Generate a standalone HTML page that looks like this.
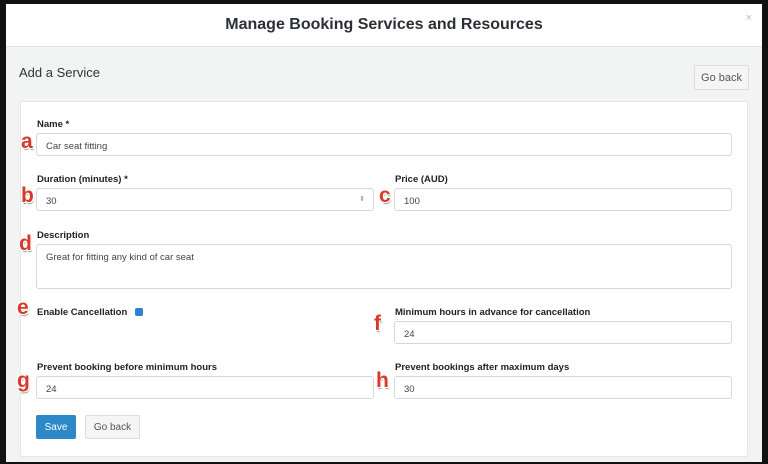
<!DOCTYPE html><html><head><style>
*{box-sizing:border-box;margin:0;padding:0}
body{width:768px;height:464px;background:#111;font-family:"Liberation Sans",sans-serif;position:relative;overflow:hidden}
.modal{position:absolute;left:6px;top:4px;width:756px;height:458px;background:#f2f4f4}
.hdr{height:43px;background:#fff;border-bottom:1px solid #dde1e2;text-align:center;font-weight:bold;font-size:16px;color:#2b3036;line-height:42px}
.x{position:absolute;right:10px;top:8px;color:#bbb;font-size:11px}
.sub{position:absolute;left:13px;top:61px;font-size:13px;color:#333}
.gb{position:absolute;border:1px solid #ddd;background:#f5f5f5;color:#555;font-size:11px;display:flex;align-items:center;justify-content:center;border-radius:2px}
.panel{position:absolute;left:14px;top:97px;width:728px;height:356px;background:#fff;border:1px solid #e3e6e7;border-radius:2px}
.l{position:absolute;font-size:9.5px;font-weight:bold;color:#222}
.i{position:absolute;height:23px;border:1px solid #d6d9db;border-radius:3px;font-size:9.5px;color:#444;padding:7px 0 0 9px;background:#fff}
.m{position:absolute;font-size:21px;font-weight:bold;color:#d9392b;text-shadow:1px 1px 0 #fff,-1px -1px 0 #fff,1px -1px 0 #fff,-1px 1px 0 #fff,1px 2px 1px #999;line-height:1}
</style></head><body>
<div class="modal">
<div class="hdr">Manage Booking Services and Resources</div><div class="x">×</div>
<div class="sub">Add a Service</div>
<div class="gb" style="left:688px;top:61px;width:55px;height:25px">Go back</div>
<div class="panel"></div>
</div>
<div class="l" style="left:37px;top:119px">Name *</div>
<div class="i" style="left:36px;top:133px;width:696px">Car seat fitting</div>
<div class="l" style="left:37px;top:174px">Duration (minutes) *</div>
<div class="i" style="left:36px;top:188px;width:338px">30<span style="position:absolute;right:8px;top:6px;color:#aaa;font-size:7px">⬍</span></div>
<div class="l" style="left:395px;top:174px">Price (AUD)</div>
<div class="i" style="left:394px;top:188px;width:338px">100</div>
<div class="l" style="left:37px;top:230px">Description</div>
<div class="i" style="left:36px;top:244px;width:696px;height:45px">Great for fitting any kind of car seat</div>
<div class="l" style="left:37px;top:307px">Enable Cancellation</div>
<div style="position:absolute;left:135px;top:308px;width:8px;height:8px;background:#2f80d8;border-radius:2px"></div>
<div class="l" style="left:395px;top:307px">Minimum hours in advance for cancellation</div>
<div class="i" style="left:394px;top:321px;width:338px">24</div>
<div class="l" style="left:37px;top:362px">Prevent booking before minimum hours</div>
<div class="i" style="left:36px;top:376px;width:338px">24</div>
<div class="l" style="left:395px;top:362px">Prevent bookings after maximum days</div>
<div class="i" style="left:394px;top:376px;width:338px">30</div>
<div style="position:absolute;left:36px;top:415px;width:40px;height:24px;background:#2d88c8;border-radius:2px;color:#fff;font-size:10px;display:flex;align-items:center;justify-content:center">Save</div>
<div class="gb" style="left:85px;top:415px;width:55px;height:24px;font-size:10px">Go back</div>
<div class="m" style="left:21px;top:131px">a</div>
<div class="m" style="left:21px;top:185px">b</div>
<div class="m" style="left:379px;top:185px">c</div>
<div class="m" style="left:19px;top:233px">d</div>
<div class="m" style="left:17px;top:297px">e</div>
<div class="m" style="left:374px;top:313px">f</div>
<div class="m" style="left:17px;top:370px">g</div>
<div class="m" style="left:376px;top:370px">h</div>
</body></html>
